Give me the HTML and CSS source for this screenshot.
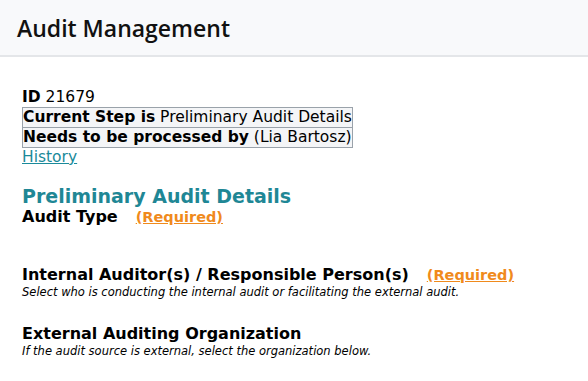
FILE: index.html
```html
<!DOCTYPE html>
<html>
<head>
<meta charset="utf-8">
<link rel="stylesheet" href="styles.css">
</head>
<body>
<header class="topbar">
  <h1 class="title">Audit Management</h1>
</header>
<main class="content">
  <div class="meta">
    <div class="meta-line"><b>ID</b> 21679</div>
    <div class="status">
      <div class="status-row"><b>Current Step is</b> Preliminary Audit Details</div>
      <div class="status-row"><b>Needs to be processed by</b> (Lia Bartosz)</div>
    </div>
    <a class="link" href="#">History</a>
  </div>
  <h2 class="section-title">Preliminary Audit Details</h2>
  <div class="field">
    <div class="field-label">Audit Type <a class="required" href="#">(Required)</a></div>
  </div>
  <div class="field field-spaced">
    <div class="field-label">Internal Auditor(s) / Responsible Person(s) <a class="required" href="#">(Required)</a></div>
    <div class="field-help">Select who is conducting the internal audit or facilitating the external audit.</div>
  </div>
  <div class="field field-spaced2">
    <div class="field-label">External Auditing Organization</div>
    <div class="field-help">If the audit source is external, select the organization below.</div>
  </div>
</main>
</body>
</html>
```
FILE: styles.css
```css
html, body {
  margin: 0;
  padding: 0;
  background: #ffffff;
}
body {
  font-family: "DejaVu Sans", Verdana, sans-serif;
  color: #000;
}
.topbar {
  background: #f8f9fb;
  border-bottom: 2px solid #e4e6e9;
  height: 55px;
  display: flex;
  align-items: center;
  padding-left: 17px;
}
.title {
  margin: 0;
  font-family: "Open Sans", sans-serif;
  font-weight: 600;
  font-size: 23px;
  color: #111;
}
.content {
  padding: 31px 22px 0 22px;
}
.meta {
  font-size: 15.5px;
  line-height: 19px;
}
.status {
  display: inline-flex;
  flex-direction: column;
  background: #f4f5f7;
  border: 1px solid #9aa2aa;
}
.status-row + .status-row {
  border-top: 1px solid #9aa2aa;
}
.meta .link {
  display: block;
  width: max-content;
  color: #1a8a9a;
}
.section-title {
  margin: 18px 0 0 0;
  font-size: 19px;
  line-height: 22px;
  color: #1f8795;
  font-weight: bold;
}
.field-label {
  font-size: 16px;
  font-weight: bold;
  line-height: 20px;
  display: flex;
  align-items: baseline;
  gap: 18px;
}
.required {
  color: #f08a1c;
  font-size: 14.5px;
  font-weight: bold;
}
.field-help {
  font-size: 11.5px;
  font-style: italic;
  line-height: 15px;
}
.field-spaced {
  margin-top: 38px;
}
.field-spaced2 {
  margin-top: 24px;
}
```
